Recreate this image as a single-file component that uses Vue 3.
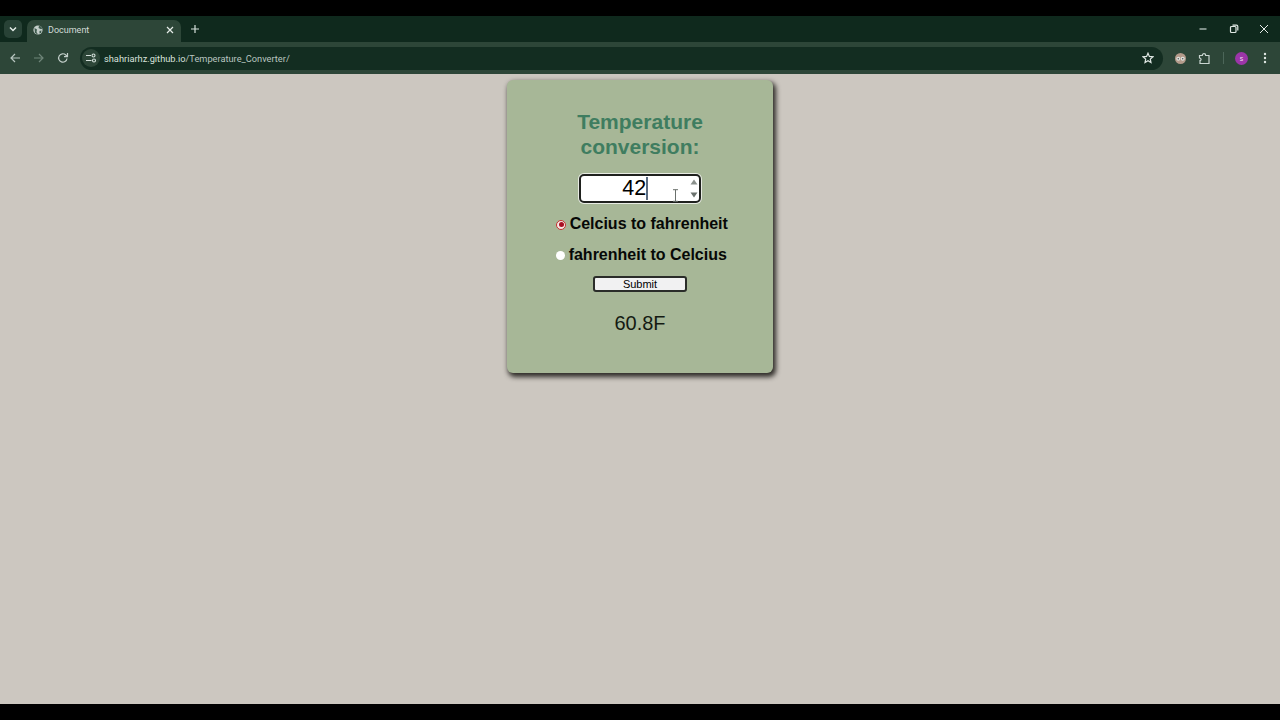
<script setup>
const title = 'Temperature conversion:'
</script>

<template>
  <div class="screen">
    <div class="letterbox"></div>
    <div class="chrome">
      <div class="tabstrip">
        <div class="tabsearch">
          <svg width="10" height="10" viewBox="0 0 10 10"><path d="M2 3.500 5 6.500 8 3.500" fill="none" stroke="#e4ece8" stroke-width="1.500"/></svg>
        </div>
        <div class="tab">
          <svg class="globe" width="10" height="10" viewBox="0 0 10 10"><circle cx="5" cy="5" r="4.600" fill="#c3cec9"/><path d="M1.500 3 4 4.500 3.500 7 5 9.500 2 8ZM6 .8 5.500 3 8 4.200 9.300 3.500 8 1.500ZM6.500 6 8.500 5.500 8 8 6.500 8.500Z" fill="#3d5a4d"/></svg>
          <span class="tabtitle">Document</span>
          <svg class="tabclose" width="8" height="8" viewBox="0 0 8 8"><path d="M1 1 7 7M7 1 1 7" stroke="#e6ece9" stroke-width="1.200"/></svg>
        </div>
        <svg class="newtab" width="10" height="10" viewBox="0 0 10 10"><path d="M5 1V9M1 5H9" stroke="#d5e0db" stroke-width="1.200"/></svg>
        <div class="winctl">
          <svg width="10" height="10" viewBox="0 0 10 10"><path d="M1.500 5H8.500" stroke="#c9d5d0" stroke-width="1.200"/></svg>
          <svg width="10" height="10" viewBox="0 0 10 10"><rect x="1.500" y="2.500" width="5.500" height="6" rx="1" fill="none" stroke="#dfe7e3" stroke-width="1.200"/><path d="M3.500 1.200H7.500A1.300 1.300 0 0 1 8.800 2.500V6.500" fill="none" stroke="#dfe7e3" stroke-width="1.200"/></svg>
          <svg width="10" height="10" viewBox="0 0 10 10"><path d="M1 1 9 9M9 1 1 9" stroke="#e6ece9" stroke-width="1"/></svg>
        </div>
      </div>
      <div class="toolbar">
        <svg class="nav" width="12" height="12" viewBox="0 0 12 12"><path d="M11 6H2M6 2 2 6 6 10" fill="none" stroke="#b8c6c0" stroke-width="1.200"/></svg>
        <svg class="nav" width="12" height="12" viewBox="0 0 12 12"><path d="M1 6H10M6 2 10 6 6 10" fill="none" stroke="#6f8579" stroke-width="1.200"/></svg>
        <svg class="nav" width="12" height="12" viewBox="0 0 12 12"><path d="M10 6.500A4.200 4.200 0 1 1 8.800 3L10.300 4.300M10.500 1V4.600H7" fill="none" stroke="#c4d0cb" stroke-width="1.200"/></svg>
        <div class="omnibox">
          <div class="siteicon">
            <svg width="12" height="12" viewBox="0 0 12 12"><path d="M1 3.500H6M1 8.500H6.500" stroke="#d5e0db" stroke-width="1.100"/><circle cx="8.500" cy="3.500" r="1.500" fill="none" stroke="#d5e0db" stroke-width="1.100"/><circle cx="9" cy="8.500" r="1.500" fill="none" stroke="#d5e0db" stroke-width="1.100"/></svg>
          </div>
          <span class="url"><span class="host">shahriarhz.github.io</span>/Temperature_Converter/</span>
          <svg class="star" width="12" height="12" viewBox="0 0 12 12"><path d="M6 1.200 7.400 4.400 10.900 4.800 8.300 7.100 9 10.600 6 8.800 3 10.600 3.700 7.100 1.100 4.800 4.600 4.400Z" fill="none" stroke="#dfe7e3" stroke-width="1.200"/></svg>
        </div>
        <svg class="ext-avatar" width="13" height="13" viewBox="0 0 13 13"><circle cx="6.500" cy="6.500" r="5.500" fill="#b39a8a"/><circle cx="4.300" cy="6.800" r="2" fill="#dfe3de"/><circle cx="8.700" cy="6.800" r="2" fill="#dfe3de"/><circle cx="4.300" cy="6.800" r=".8" fill="#555"/><circle cx="8.700" cy="6.800" r=".8" fill="#555"/></svg>
        <svg class="puzzle" width="13" height="13" viewBox="0 0 13 13"><path d="M1.500 3.500H4.300C4.300 1 7.700 1 7.700 3.500H11V11.500H2V8.500C3.500 8.500 3.500 6 1.500 6Z" fill="none" stroke="#c9d5d0" stroke-width="1.200"/></svg>
        <div class="divider"></div>
        <div class="profile">s</div>
        <svg class="menu" width="4" height="12" viewBox="0 0 4 12"><circle cx="2" cy="2" r="1.200" fill="#dfe7e3"/><circle cx="2" cy="6" r="1.200" fill="#dfe7e3"/><circle cx="2" cy="10" r="1.200" fill="#dfe7e3"/></svg>
      </div>
    </div>

    <main class="page">
      <section class="card">
        <h1 class="heading">{{ title }}</h1>
        <div class="numfield">
          <span class="numvalue">42</span>
          <span class="caret"></span>
          <span class="spin">
            <svg width="8" height="6" viewBox="0 0 8 6"><path d="M4 .5 7.500 5.500H.5Z" fill="#8a908c"/></svg>
            <svg width="8" height="6" viewBox="0 0 8 6"><path d="M4 5.500 7.500 .5H.5Z" fill="#6a716d"/></svg>
          </span>
          <svg class="ibeam" width="7" height="13" viewBox="0 0 7 13"><path d="M1 .7H6M3.500 .7V12.300M1 12.300H6" fill="none" stroke="#6a706c" stroke-width="1"/></svg>
        </div>
        <div class="option first">
          <span class="radio on"><span class="dot"></span></span>
          <span>Celcius to fahrenheit</span>
        </div>
        <div class="option second">
          <span class="radio"></span>
          <span>fahrenheit to Celcius</span>
        </div>
        <div class="submit">Submit</div>
        <div class="result">60.8F</div>
      </section>
    </main>
    <div class="letterbox bottom"></div>
  </div>
</template>

<style>
html, body { margin: 0; background: #000; }
</style>

<style scoped>
.screen {
  width: 1280px;
  height: 720px;
  display: flex;
  flex-direction: column;
  overflow: hidden;
  font-family: "Liberation Sans", Arial, sans-serif;
  background: #000;
}
.letterbox { height: 16px; background: #000; flex: none; }
.chrome { flex: none; height: 58px; display: flex; flex-direction: column; }
.tabstrip {
  height: 26px;
  background: #0f291d;
  display: flex;
  align-items: flex-end;
  padding-left: 4px;
}
.tabsearch {
  width: 18px;
  height: 18px;
  margin-bottom: 4px;
  border-radius: 5px;
  background: #284236;
  display: flex;
  align-items: center;
  justify-content: center;
}
.tab {
  width: 154px;
  height: 22px;
  margin-left: 5px;
  padding: 0 7px 3px 6px;
  box-sizing: border-box;
  background: #2d4638;
  border-radius: 7px 7px 0 0;
  display: flex;
  align-items: center;
  gap: 5px;
}
.tabtitle { flex: 1; font-size: 9px; color: #d3ddd8; font-family: Roboto, "Liberation Sans", sans-serif; }
.newtab { margin: 0 0 8px 9px; }
.winctl {
  margin-left: auto;
  margin-bottom: 8px;
  padding-right: 11px;
  display: flex;
  gap: 21px;
}
.winctl svg:first-child { transform: translateX(1px); }
.winctl svg:nth-child(2) { transform: translateX(1px); }
.toolbar {
  height: 32px;
  background: #2d4638;
  display: flex;
  align-items: center;
  padding-left: 9px;
}
.nav { margin-right: 12px; flex: none; }
.omnibox {
  width: 1083px;
  height: 23px;
  margin-left: -1px;
  margin-right: 11px;
  flex: none;
  border-radius: 12px;
  background: #132d21;
  display: flex;
  align-items: center;
  box-sizing: border-box;
  padding-right: 9px;
}
.siteicon {
  width: 18px;
  height: 18px;
  margin-left: 2px;
  border-radius: 50%;
  background: #2d4638;
  display: flex;
  align-items: center;
  justify-content: center;
}
.url {
  flex: 1;
  margin-left: 4px;
  font-size: 9.25px;
  color: #b9c6c0;
  font-family: Roboto, "Liberation Sans", sans-serif;
  white-space: nowrap;
}
.host { color: #d8e1dc; }
.ext-avatar { flex: none; margin-right: 11px; }
.puzzle { flex: none; margin-right: 12px; }
.divider { width: 1px; height: 12px; background: #4c6659; margin-right: 11px; flex: none; }
.profile {
  width: 13px;
  height: 13px;
  flex: none;
  border-radius: 50%;
  background: #9c35a8;
  color: #f0dff2;
  font-size: 7px;
  line-height: 13px;
  text-align: center;
  margin-right: 15px;
}
.menu { flex: none; }

.page {
  flex: 1;
  min-height: 0;
  background: #ccc7c0;
  display: flex;
  flex-direction: column;
  align-items: center;
  padding-top: 6px;
  box-sizing: border-box;
}
.card {
  width: 266px;
  height: 293px;
  box-sizing: border-box;
  padding-top: 29px;
  background: #a7b797;
  border-radius: 6px;
  box-shadow: 2px 3px 5px 1px rgba(20, 18, 14, 0.85);
  display: flex;
  flex-direction: column;
  align-items: center;
}
.heading {
  margin: 0;
  width: 150px;
  text-align: center;
  font-size: 21px;
  line-height: 25px;
  font-weight: 700;
  color: #3f7d60;
}
.numfield {
  position: relative;
  width: 122px;
  height: 29px;
  margin-top: 15px;
  box-sizing: border-box;
  border: 2px solid #1f211e;
  border-radius: 5px;
  background: #fff;
  display: flex;
  align-items: center;
  justify-content: center;
  padding-right: 10px;
  box-shadow: 0 0 0 1px #e8ece4;
}
.numvalue { font-size: 21.500px; line-height: 25px; color: #000; }
.caret { width: 1.500px; height: 23px; background: #5a6b80; }
.spin {
  position: absolute;
  right: 1px;
  top: 3px;
  bottom: 3px;
  display: flex;
  flex-direction: column;
  justify-content: space-between;
}
.ibeam { position: absolute; left: 91px; top: 13px; }
.option {
  display: flex;
  align-items: center;
  gap: 3.500px;
  font-size: 16px;
  font-weight: 700;
  line-height: 20px;
  color: #060806;
  white-space: nowrap;
  margin-left: 4px;
}
.first { margin-top: 11px; }
.second { margin-top: 11px; margin-left: 3px; }
.radio {
  width: 9px;
  height: 9px;
  border-radius: 50%;
  background: #fff;
  display: flex;
  align-items: center;
  justify-content: center;
  flex: none;
  margin-top: 1px;
}
.radio.on { width: 10px; height: 10px; box-sizing: border-box; border: 1.500px solid #c4302f; background: #f6e7e4; }
.dot { width: 5px; height: 5px; border-radius: 50%; background: #a80e22; }
.submit {
  width: 94px;
  height: 16px;
  margin-top: 11px;
  box-sizing: border-box;
  border: 2px solid #2a2c29;
  border-radius: 3px;
  background: #f1f1f2;
  font-size: 11px;
  line-height: 12px;
  text-align: center;
  color: #000;
}
.result {
  margin-top: 20px;
  font-size: 20px;
  line-height: 23px;
  color: #141a12;
}
.bottom { height: 16px; }
</style>
